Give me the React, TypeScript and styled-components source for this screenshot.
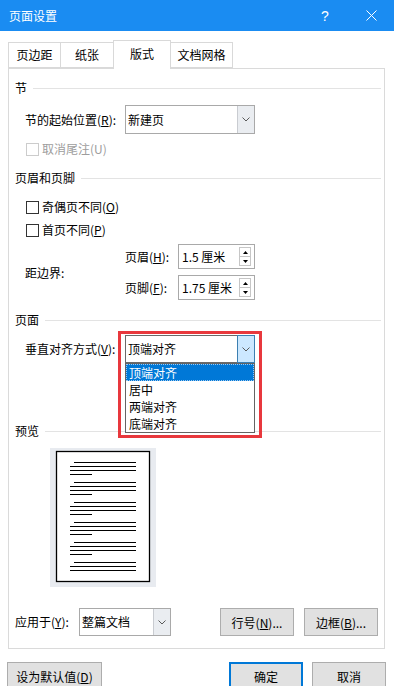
import React from "react";
import styled, { createGlobalStyle } from "styled-components";

const Global = createGlobalStyle`
  html, body { margin: 0; padding: 0; background: #fff; }
  body {
    font-family: "Noto Sans CJK SC", "Noto Sans", sans-serif;
    font-size: 12px;
    color: #000;
    overflow: hidden;
  }
  u { text-underline-offset: 1px; }
`;

const Dialog = styled.div`
  width: 394px;
  height: 686px;
  overflow: hidden;
  background: #fff;
  display: flex;
  flex-direction: column;
`;

const TitleBar = styled.div`
  height: 31px;
  flex: none;
  background: #1a8cf2;
  color: #fff;
  display: flex;
  align-items: center;
  padding-left: 9px;
`;

const TitleText = styled.div`
  flex: 1;
  font-size: 12px;
  line-height: 31px;
`;

const TitleButton = styled.div`
  width: 46px;
  height: 31px;
  display: flex;
  align-items: center;
  justify-content: center;
  font-family: "Liberation Sans", sans-serif;
  font-size: 14px;
`;

const TabStrip = styled.div`
  margin-top: 9px;
  height: 28px;
  flex: none;
  padding-left: 8px;
  display: flex;
  align-items: flex-end;
`;

const Tab = styled.div<{ $w: number; $active?: boolean }>`
  box-sizing: border-box;
  width: ${(p) => p.$w}px;
  height: ${(p) => (p.$active ? 29 : 26)}px;
  margin-bottom: ${(p) => (p.$active ? -1 : 0)}px;
  margin-left: -1px;
  &:first-child { margin-left: 0; }
  border: 1px solid #d9d9d9;
  border-bottom: ${(p) => (p.$active ? "none" : "1px solid #d9d9d9")};
  background: #fff;
  position: relative;
  z-index: ${(p) => (p.$active ? 2 : 1)};
  display: flex;
  align-items: center;
  justify-content: center;
  padding-bottom: ${(p) => (p.$active ? 2 : 0)}px;
  line-height: 16px;
`;

const Panel = styled.div`
  box-sizing: border-box;
  margin-left: 8px;
  width: 377px;
  height: 581px;
  flex: none;
  border: 1px solid #dadada;
  display: flex;
  flex-direction: column;
`;

const SectionHeader = styled.div<{ $mt: number }>`
  margin-top: ${(p) => p.$mt}px;
  height: 18px;
  flex: none;
  display: flex;
  align-items: center;
  padding-left: 6px;
  padding-right: 3px;
  line-height: 18px;
  &::after {
    content: "";
    flex: 1;
    height: 1px;
    background: #e3e3e3;
    margin-left: 6px;
  }
`;

const Row = styled.div<{ $mt: number; $h: number; $pl?: number }>`
  margin-top: ${(p) => p.$mt}px;
  height: ${(p) => p.$h}px;
  flex: none;
  display: flex;
  align-items: center;
  padding-left: ${(p) => p.$pl ?? 16}px;
  line-height: 16px;
`;

const Label = styled.div<{ $w: number }>`
  width: ${(p) => p.$w}px;
  flex: none;
  white-space: nowrap;
`;

const SelectWrap = styled.div`
  position: relative;
`;

const SelectBox = styled.div<{ $w: number; $h: number; $focus?: boolean }>`
  box-sizing: border-box;
  width: ${(p) => p.$w}px;
  height: ${(p) => p.$h}px;
  border: 1px solid ${(p) => (p.$focus ? "#6a6a6a" : "#a9a9a9")};
  background: #fff;
  display: flex;
  align-items: stretch;
`;

const SelectValue = styled.div`
  flex: 1;
  display: flex;
  align-items: center;
  padding-left: 2px;
`;

const SelectArrow = styled.div<{ $focus?: boolean }>`
  width: 17px;
  box-sizing: border-box;
  display: flex;
  align-items: center;
  justify-content: center;
  background: ${(p) => (p.$focus ? "#cce8ff" : "#eaedf1")};
  border-left: 1px solid ${(p) => (p.$focus ? "#3c7fb1" : "#c9ccd1")};
  ${(p) => (p.$focus ? "margin: -1px -1px -1px 0; border: 1px solid #3c7fb1; width: 18px;" : "")}
`;

const DropList = styled.div`
  position: absolute;
  left: 0;
  top: 100%;
  width: 130px;
  box-sizing: border-box;
  border: 1px solid #646464;
  background: #fff;
  z-index: 5;
  display: flex;
  flex-direction: column;
`;

const DropItem = styled.div<{ $sel?: boolean }>`
  height: 17px;
  line-height: 17px;
  padding-left: 2px;
  box-sizing: border-box;
  background: ${(p) => (p.$sel ? "#0078d7" : "#fff")};
  color: ${(p) => (p.$sel ? "#fff" : "#000")};
  border: 1px ${(p) => (p.$sel ? "dotted #9cc8f0" : "solid transparent")};
  display: flex;
  align-items: center;
`;

const Highlight = styled.div`
  position: absolute;
  left: -7px;
  top: -4px;
  width: 144px;
  height: 107px;
  box-sizing: border-box;
  border: 3px solid #e8383d;
  z-index: 6;
  pointer-events: none;
`;

const CheckBox = styled.span<{ $disabled?: boolean }>`
  box-sizing: border-box;
  width: 13px;
  height: 13px;
  flex: none;
  border: 1px solid ${(p) => (p.$disabled ? "#cccccc" : "#333")};
  margin-left: 1px;
  margin-right: 3px;
  background: #fff;
`;

const CheckText = styled.span<{ $disabled?: boolean }>`
  color: ${(p) => (p.$disabled ? "#9d9d9d" : "#000")};
`;

const MarginBlock = styled.div`
  margin-top: 5px;
  height: 56px;
  flex: none;
  padding-left: 16px;
  display: flex;
  align-items: center;
`;

const SpinColumn = styled.div`
  display: flex;
  flex-direction: column;
  gap: 6px;
`;

const SpinRow = styled.div`
  display: flex;
  align-items: center;
`;

const SpinBox = styled.div`
  box-sizing: border-box;
  width: 77px;
  height: 25px;
  border: 1px solid #a9a9a9;
  display: flex;
  align-items: center;
  padding: 0 3px 0 3px;
`;

const SpinValue = styled.div`
  flex: 1;
`;

const SpinButtons = styled.div`
  width: 12px;
  height: 19px;
  box-sizing: border-box;
  border: 1px solid #c6c6c6;
  display: flex;
  flex-direction: column;
`;

const SpinBtn = styled.div<{ $top?: boolean }>`
  flex: 1;
  display: flex;
  align-items: center;
  justify-content: center;
  border-bottom: ${(p) => (p.$top ? "1px solid #c6c6c6" : "none")};
  background: #fff;
`;

const PreviewArea = styled.div`
  margin-top: 8px;
  padding-left: 41px;
  height: 139px;
  flex: none;
`;

const BottomRow = styled.div`
  margin-top: 21px;
  height: 28px;
  flex: none;
  display: flex;
  align-items: center;
  padding: 0 6px;
  line-height: 16px;
`;

const Spacer = styled.div`
  flex: 1;
`;

const Button = styled.button<{ $w: number; $primary?: boolean }>`
  box-sizing: border-box;
  width: ${(p) => p.$w}px;
  height: 28px;
  background: #e1e1e1;
  border: ${(p) => (p.$primary ? "2px solid #0078d7" : "1px solid #adadad")};
  font-family: inherit;
  font-size: 12px;
  color: #000;
  padding: 0;
  display: flex;
  align-items: center;
  justify-content: center;
  flex: none;
`;

const ButtonGroup = styled.div`
  display: flex;
  gap: 10px;
`;

const Footer = styled.div`
  margin-top: 13px;
  padding: 0 8px 0 7px;
  display: flex;
  align-items: flex-start;
`;

const FooterGroup = styled.div`
  display: flex;
  gap: 9px;
`;

const Chevron = () => (
  <svg width="8" height="5" viewBox="0 0 8 5">
    <polyline points="0.5,0.5 4,4 7.5,0.5" fill="none" stroke="#5a5a5a" strokeWidth="1" />
  </svg>
);

const UpTri = () => (
  <svg width="5" height="3" viewBox="0 0 5 3">
    <polygon points="2.5,0 5,3 0,3" fill="#000" />
  </svg>
);
const DownTri = () => (
  <svg width="5" height="3" viewBox="0 0 5 3">
    <polygon points="0,0 5,0 2.5,3" fill="#000" />
  </svg>
);

const CloseIcon = () => (
  <svg width="11" height="11" viewBox="0 0 11 11">
    <path d="M0.5 0.5 L10.5 10.5 M10.5 0.5 L0.5 10.5" stroke="#fff" strokeWidth="1" />
  </svg>
);

const PagePreview = () => {
  const groups: number[][] = [];
  for (let g = 0; g < 6; g++) {
    const base = 14 + g * 20;
    groups.push(g < 5 ? [base, base + 4, base + 8, base + 12] : [base, base + 4, base + 8]);
  }
  return (
    <svg width="106" height="139" viewBox="0 0 106 139">
      <rect x="0" y="0" width="106" height="139" fill="#e8ebf0" />
      <rect x="6.5" y="3.5" width="93" height="130" fill="#fff" stroke="#000" strokeWidth="1.3" />
      {groups.map((ys, gi) =>
        ys.map((y, li) => {
          const x1 = li === 0 ? 24 : 20;
          const x2 = li === 3 ? 42 : 86;
          return <line key={`${gi}-${li}`} x1={x1} x2={x2} y1={y + 0.5} y2={y + 0.5} stroke="#000" strokeWidth="1" />;
        })
      )}
    </svg>
  );
};

export default function App() {
  return (
    <>
      <Global />
      <Dialog>
        <TitleBar>
          <TitleText>页面设置</TitleText>
          <TitleButton>?</TitleButton>
          <TitleButton>
            <CloseIcon />
          </TitleButton>
        </TitleBar>

        <TabStrip>
          <Tab $w={53}>页边距</Tab>
          <Tab $w={54}>纸张</Tab>
          <Tab $w={58} $active>
            版式
          </Tab>
          <Tab $w={63}>文档网格</Tab>
        </TabStrip>

        <Panel>
          <SectionHeader $mt={10}>节</SectionHeader>
          <Row $mt={8} $h={29}>
            <Label $w={100}>
              节的起始位置(<u>R</u>):
            </Label>
            <SelectBox $w={130} $h={29}>
              <SelectValue>新建页</SelectValue>
              <SelectArrow>
                <Chevron />
              </SelectArrow>
            </SelectBox>
          </Row>
          <Row $mt={6} $h={18}>
            <CheckBox $disabled />
            <CheckText $disabled>取消尾注(U)</CheckText>
          </Row>

          <SectionHeader $mt={11}>页眉和页脚</SectionHeader>
          <Row $mt={11} $h={18}>
            <CheckBox />
            <CheckText>
              奇偶页不同(<u>O</u>)
            </CheckText>
          </Row>
          <Row $mt={5} $h={18}>
            <CheckBox />
            <CheckText>
              首页不同(<u>P</u>)
            </CheckText>
          </Row>
          <MarginBlock>
            <Label $w={100}>距边界:</Label>
            <SpinColumn>
              <SpinRow>
                <Label $w={53}>
                  页眉(<u>H</u>):
                </Label>
                <SpinBox>
                  <SpinValue>1.5 厘米</SpinValue>
                  <SpinButtons>
                    <SpinBtn $top>
                      <UpTri />
                    </SpinBtn>
                    <SpinBtn>
                      <DownTri />
                    </SpinBtn>
                  </SpinButtons>
                </SpinBox>
              </SpinRow>
              <SpinRow>
                <Label $w={53}>
                  页脚(<u>F</u>):
                </Label>
                <SpinBox>
                  <SpinValue>1.75 厘米</SpinValue>
                  <SpinButtons>
                    <SpinBtn $top>
                      <UpTri />
                    </SpinBtn>
                    <SpinBtn>
                      <DownTri />
                    </SpinBtn>
                  </SpinButtons>
                </SpinBox>
              </SpinRow>
            </SpinColumn>
          </MarginBlock>

          <SectionHeader $mt={11}>页面</SectionHeader>
          <Row $mt={6} $h={28}>
            <Label $w={100}>
              垂直对齐方式(<u>V</u>):
            </Label>
            <SelectWrap>
              <SelectBox $w={130} $h={28} $focus>
                <SelectValue>顶端对齐</SelectValue>
                <SelectArrow $focus>
                  <Chevron />
                </SelectArrow>
              </SelectBox>
              <DropList>
                <DropItem $sel>顶端对齐</DropItem>
                <DropItem>居中</DropItem>
                <DropItem>两端对齐</DropItem>
                <DropItem>底端对齐</DropItem>
              </DropList>
              <Highlight />
            </SelectWrap>
          </Row>

          <SectionHeader $mt={59}>预览</SectionHeader>
          <PreviewArea>
            <PagePreview />
          </PreviewArea>

          <BottomRow>
            <Label $w={64}>
              应用于(<u>Y</u>):
            </Label>
            <SelectBox $w={92} $h={28}>
              <SelectValue>整篇文档</SelectValue>
              <SelectArrow>
                <Chevron />
              </SelectArrow>
            </SelectBox>
            <Spacer />
            <ButtonGroup>
              <Button $w={74}>
                行号(<u>N</u>)...
              </Button>
              <Button $w={74}>
                边框(<u>B</u>)...
              </Button>
            </ButtonGroup>
          </BottomRow>
        </Panel>

        <Footer>
          <Button $w={95}>
            设为默认值(<u>D</u>)
          </Button>
          <Spacer />
          <FooterGroup>
            <Button $w={74} $primary>
              确定
            </Button>
            <Button $w={74}>取消</Button>
          </FooterGroup>
        </Footer>
      </Dialog>
    </>
  );
}
